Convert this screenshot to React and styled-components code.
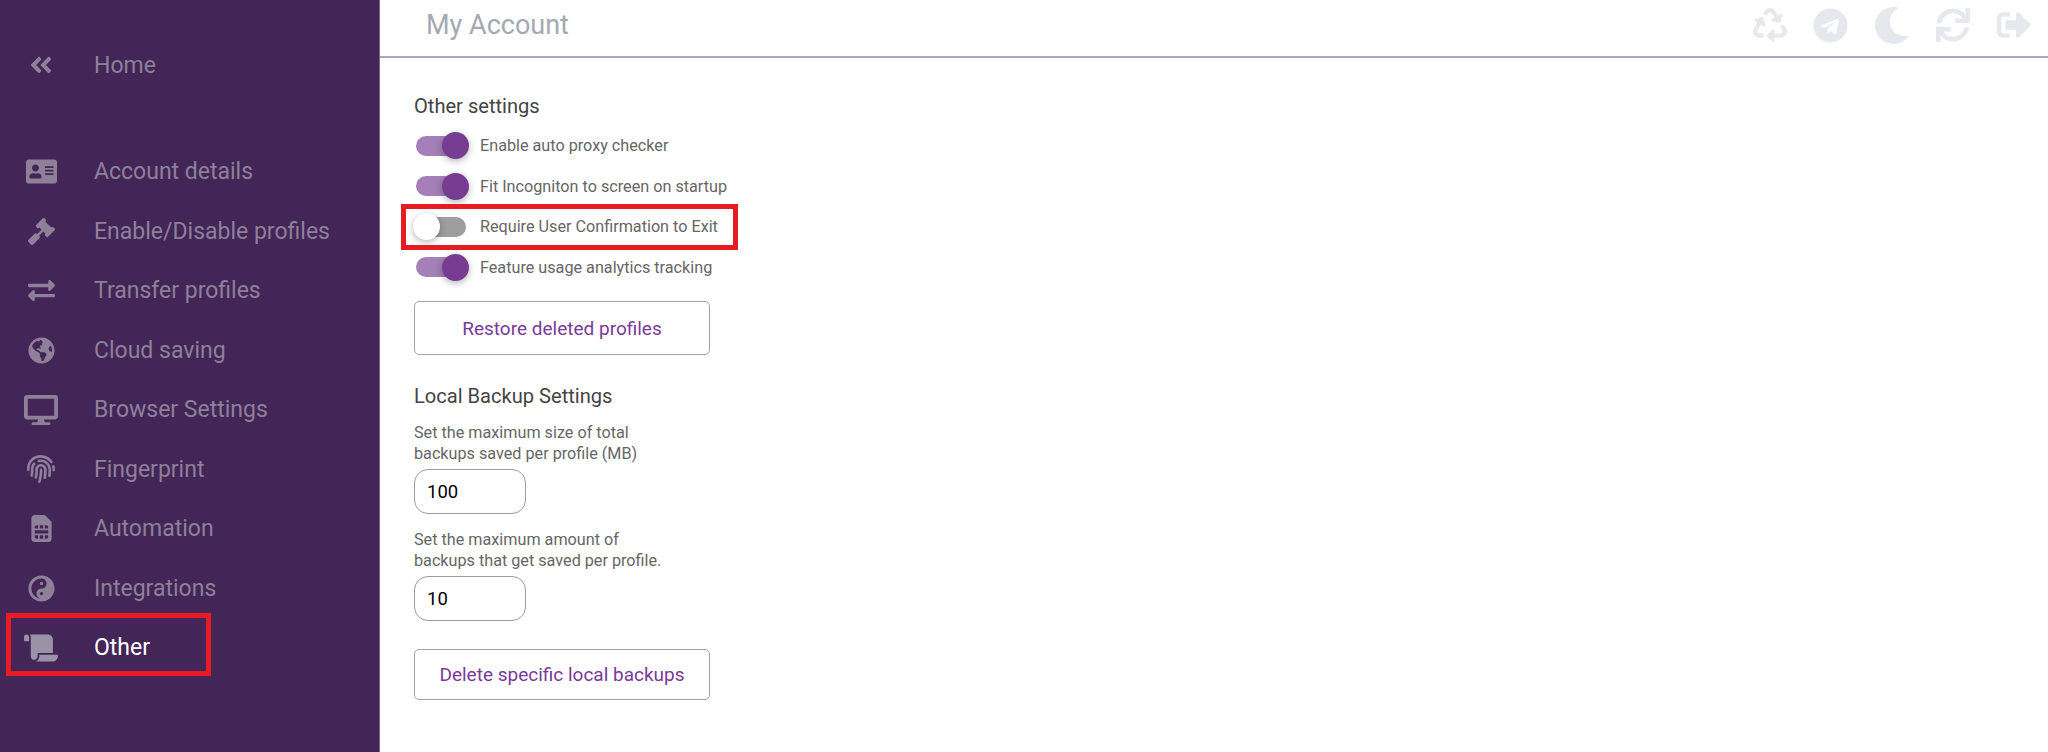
import React from "react";
import styled, { createGlobalStyle } from "styled-components";
import {
  FaAngleDoubleLeft, FaAddressCard, FaGavel, FaExchangeAlt, FaGlobeAmericas, FaDesktop,
  FaFingerprint, FaSimCard, FaYinYang, FaScroll, FaRecycle, FaTelegram, FaMoon, FaSync, FaSignOutAlt,
} from "react-icons/fa";

const Global = createGlobalStyle`
  html, body { margin: 0; padding: 0; background: #fff; }
  body { font-family: Roboto, "Liberation Sans", sans-serif; overflow: hidden; }
  *, *::after { box-sizing: border-box; }
`;

const Page = styled.div`
  display: flex;
  width: 2048px;
  height: 752px;
  overflow: hidden;
`;

const Sidebar = styled.nav`
  flex: 0 0 380px;
  height: 752px;
  padding-top: 35.5px;
  background: #432557;
  border-right: 1.5px solid #77648a;
`;

const HomeSpacer = styled.div`
  height: 47px;
`;

const NavRow = styled.div`
  position: relative;
  display: flex;
  align-items: center;
  height: 59.5px;
  padding-left: 19px;
  color: ${(p) => (p.$active ? "#ffffff" : "#8e8099")};
  font-size: 23px;
  ${(p) =>
    p.$marked &&
    `&::after {
      content: "";
      position: absolute;
      left: 6px;
      top: -5.5px;
      width: 205px;
      height: 63px;
      border: 5px solid #e61c22;
    }`}
`;

const NavIcon = styled.span`
  display: flex;
  align-items: center;
  justify-content: center;
  width: 44px;
  margin-right: 31px;
  color: ${(p) => (p.$active ? "#9b92a8" : "#8e8099")};
  font-size: ${(p) => p.$size}px;
`;

const Main = styled.main`
  flex: 1;
  min-width: 0;
`;

const Header = styled.header`
  display: flex;
  align-items: center;
  justify-content: space-between;
  height: 58px;
  padding: 0 4px 6px 46px;
  border-bottom: 2px solid #aaa6bb;
`;

const Title = styled.h1`
  margin: 0;
  color: #a3a9b2;
  font-size: 27px;
  font-weight: 400;
`;

const HeaderIcons = styled.div`
  display: flex;
  align-items: center;
`;

const HeaderIcon = styled.span`
  display: flex;
  align-items: center;
  justify-content: center;
  width: 61px;
  color: #e5e8ec;
  font-size: ${(p) => p.$size}px;
`;

const Content = styled.div`
  padding: 34px 0 0 34px;
`;

const SectionTitle = styled.h2`
  margin: ${(p) => p.$top || 0}px 0 0;
  color: #444444;
  font-size: 20.1px;
  font-weight: 400;
  line-height: 28px;
`;

const SettingsList = styled.div`
  margin-top: 5.5px;
`;

const ToggleRow = styled.div`
  position: relative;
  display: flex;
  align-items: center;
  height: 40.5px;
  color: #666666;
  font-size: 16.2px;
  ${(p) =>
    p.$marked &&
    `&::after {
      content: "";
      position: absolute;
      left: -13px;
      top: -3px;
      width: 337px;
      height: 46px;
      border: 5px solid #e61c22;
    }`}
`;

const Track = styled.span`
  position: relative;
  flex: none;
  width: 50px;
  height: 20px;
  margin: 0 14px 0 2px;
  border-radius: 10px;
  background: ${(p) => (p.$on ? "#a57fb7" : "#9e9e9e")};
`;

const Thumb = styled.span`
  position: absolute;
  top: -3.5px;
  left: ${(p) => (p.$on ? "26px" : "-3px")};
  width: 27px;
  height: 27px;
  border-radius: 50%;
  background: ${(p) => (p.$on ? "#753c92" : "#ffffff")};
  box-shadow: 0 2px 7px rgba(0, 0, 0, 0.3);
`;

const OutlineButton = styled.button`
  display: block;
  width: 296px;
  height: ${(p) => p.$height}px;
  margin-top: ${(p) => p.$top}px;
  padding: 0;
  background: #fff;
  border: 1.5px solid #a5a0b6;
  border-radius: 5px;
  color: #7a3a97;
  font: 400 19px Roboto, sans-serif;
`;

const FieldLabel = styled.div`
  margin-top: ${(p) => p.$top}px;
  color: #666666;
  font-size: 16.2px;
  line-height: 21px;
`;

const NumberBox = styled.div`
  display: flex;
  align-items: center;
  width: 112px;
  height: 45px;
  margin-top: 5px;
  padding: 1px 0 0 12px;
  border: 1.5px solid #9c9c9c;
  border-radius: 14px;
  color: #000;
  font-size: 18.5px;
`;

const nav = [
  [FaAddressCard, "Account details", 31],
  [FaGavel, "Enable/Disable profiles", 27],
  [FaExchangeAlt, "Transfer profiles", 27],
  [FaGlobeAmericas, "Cloud saving", 27],
  [FaDesktop, "Browser Settings", 34],
  [FaFingerprint, "Fingerprint", 28],
  [FaSimCard, "Automation", 27],
  [FaYinYang, "Integrations", 27],
];

const toggles = [
  ["Enable auto proxy checker", true],
  ["Fit Incogniton to screen on startup", true],
  ["Require User Confirmation to Exit", false, true],
  ["Feature usage analytics tracking", true],
];

export default function App() {
  return (
    <Page>
      <Global />
      <Sidebar>
        <NavRow>
          <NavIcon $size={26}><FaAngleDoubleLeft /></NavIcon>
          Home
        </NavRow>
        <HomeSpacer />
        {nav.map(([Icon, label, size]) => (
          <NavRow key={label}>
            <NavIcon $size={size}><Icon /></NavIcon>
            {label}
          </NavRow>
        ))}
        <NavRow $active $marked>
          <NavIcon $active $size={34}><FaScroll /></NavIcon>
          Other
        </NavRow>
      </Sidebar>
      <Main>
        <Header>
          <Title>My Account</Title>
          <HeaderIcons>
            <HeaderIcon $size={34}><FaRecycle /></HeaderIcon>
            <HeaderIcon $size={35}><FaTelegram /></HeaderIcon>
            <HeaderIcon $size={37}><FaMoon /></HeaderIcon>
            <HeaderIcon $size={34}><FaSync /></HeaderIcon>
            <HeaderIcon $size={34}><FaSignOutAlt /></HeaderIcon>
          </HeaderIcons>
        </Header>
        <Content>
          <SectionTitle>Other settings</SectionTitle>
          <SettingsList>
            {toggles.map(([label, on, marked]) => (
              <ToggleRow key={label} $marked={marked}>
                <Track $on={on}><Thumb $on={on} /></Track>
                {label}
              </ToggleRow>
            ))}
          </SettingsList>
          <OutlineButton $height={54} $top={13.5}>Restore deleted profiles</OutlineButton>
          <SectionTitle $top={27}>Local Backup Settings</SectionTitle>
          <FieldLabel $top={12}>Set the maximum size of total<br />backups saved per profile (MB)</FieldLabel>
          <NumberBox>100</NumberBox>
          <FieldLabel $top={15}>Set the maximum amount of<br />backups that get saved per profile.</FieldLabel>
          <NumberBox>10</NumberBox>
          <OutlineButton $height={51} $top={28}>Delete specific local backups</OutlineButton>
        </Content>
      </Main>
    </Page>
  );
}
